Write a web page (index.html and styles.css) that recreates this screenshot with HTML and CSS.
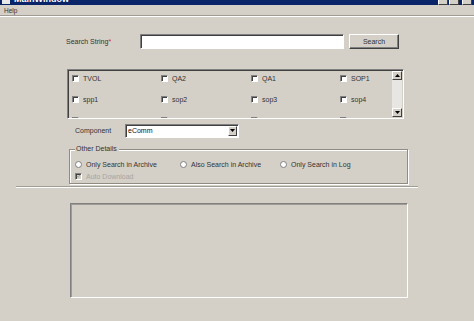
FILE: index.html
```html
<!DOCTYPE html>
<html>
<head>
<meta charset="utf-8">
<link rel="stylesheet" href="styles.css">
</head>
<body>
<div class="window">
  <div class="titlebar">
    <div class="title"><span class="appicon"></span>MainWindow</div>
    <div class="tbtns"><span class="tbtn"></span><span class="tbtn"></span><span class="tbtn"></span></div>
  </div>
  <div class="menubar"><span class="menu">Help</span></div>
  <div class="content">
    <div class="search-row">
      <label class="lbl">Search String<span class="req">*</span></label>
      <div class="input"></div>
      <div class="button">Search</div>
    </div>
    <div class="list">
      <div class="grid">
        <div class="cb"><span class="box"></span>TVOL</div>
        <div class="cb"><span class="box"></span>QA2</div>
        <div class="cb"><span class="box"></span>QA1</div>
        <div class="cb"><span class="box"></span>SOP1</div>
        <div class="cb"><span class="box"></span>spp1</div>
        <div class="cb"><span class="box"></span>sop2</div>
        <div class="cb"><span class="box"></span>sop3</div>
        <div class="cb"><span class="box"></span>sop4</div>
        <div class="cb"><span class="box"></span>sop5</div>
        <div class="cb"><span class="box"></span>sop6</div>
        <div class="cb"><span class="box"></span>EAP1</div>
        <div class="cb"><span class="box"></span>EAP2</div>
      </div>
      <div class="scrollbar">
        <div class="sbtn"><svg width="5" height="3" viewBox="0 0 5 3"><path d="M2.5 0 L5 3 L0 3 Z" fill="#000"/></svg></div>
        <div class="track"></div>
        <div class="sbtn"><svg width="5" height="3" viewBox="0 0 5 3"><path d="M0 0 L5 0 L2.5 3 Z" fill="#000"/></svg></div>
      </div>
    </div>
    <div class="comp-row">
      <label class="lbl2">Component</label>
      <div class="combo"><span class="ctext">eComm</span><span class="cbtn"><svg width="5" height="3" viewBox="0 0 5 3"><path d="M0 0 L5 0 L2.5 3 Z" fill="#000"/></svg></span></div>
    </div>
    <div class="group">
      <div class="gtitle">Other Details</div>
      <div class="radios">
        <div class="radio r1"><span class="dot"></span>Only Search in Archive</div>
        <div class="radio r2"><span class="dot"></span>Also Search in Archive</div>
        <div class="radio r3"><span class="dot"></span>Only Search in Log</div>
      </div>
      <div class="auto"><span class="box dis"><svg width="6" height="6" viewBox="0 0 6 6"><path d="M1 3 L2.5 4.5 L5 1.5" stroke="#a0a0a0" stroke-width="1.2" fill="none"/></svg></span>Auto Download</div>
    </div>
    <div class="sep"></div>
    <div class="output"></div>
  </div>
</div>
</body>
</html>
```
FILE: styles.css
```css
* { box-sizing: border-box; }
html, body { margin: 0; padding: 0; }
body {
  width: 474px;
  height: 321px;
  overflow: hidden;
  background: #d4d0c8;
  font-family: "Liberation Sans", Arial, sans-serif;
  font-size: 7px;
  color: #333;
}
.window { width: 474px; height: 321px; display: flex; flex-direction: column; }
.titlebar {
  height: 5px;
  background: #0a246a;
  display: flex;
  justify-content: space-between;
  overflow: hidden;
}
.title {
  color: #fff;
  font-weight: bold;
  font-size: 9px;
  line-height: 9px;
  margin-top: -5px;
  padding-left: 2px;
  display: flex;
  align-items: flex-start;
}
.appicon {
  width: 8px; height: 9px;
  background: #e8e8e8;
  margin-right: 4px;
}
.tbtns { display: flex; gap: 1px; padding-right: 2px; margin-top: -4px; }
.tbtn {
  width: 10px; height: 9px;
  background: #d4d0c8;
  border: 1px solid;
  border-color: #fff #404040 #404040 #fff;
}
.tbtn:last-child { margin-left: 2px; }
.menubar {
  height: 11px;
  border-bottom: 1px solid #a09c94;
  box-shadow: 0 1px 0 #fff;
  padding-left: 4px;
  display: flex;
  align-items: center;
}
.menu { font-size: 6.5px; color: #333; }
.content { display: flex; flex-direction: column; flex: 1; }
.search-row {
  display: flex;
  align-items: center;
  margin-top: 18px;
  padding-left: 66px;
  height: 15px;
}
.lbl { width: 74px; }
.req { color: #e02020; }
.input {
  width: 204px; height: 15px;
  background: #fff;
  border: 1px solid;
  border-color: #808080 #fff #fff #808080;
  box-shadow: inset 1px 1px 0 #404040;
}
.button {
  margin-left: 5px;
  width: 50px; height: 15px;
  border: 1px solid;
  border-color: #fff #404040 #404040 #fff;
  box-shadow: inset -1px -1px 0 #808080;
  display: flex; align-items: center; justify-content: center;
}
.list {
  margin-top: 20px;
  margin-left: 67px;
  width: 337px;
  height: 50px;
  border: 1px solid;
  border-color: #808080 #fff #fff #808080;
  box-shadow: inset 1px 1px 0 #404040;
  display: flex;
  overflow: hidden;
}
.grid {
  flex: 1;
  display: grid;
  grid-template-columns: 89px 90px 89px 1fr;
  grid-auto-rows: 21px;
  padding-left: 4px;
  margin-top: -2px;
  overflow: hidden;
}
.cb { display: flex; align-items: center; }
.box {
  width: 7px; height: 7px;
  background: #fff;
  border: 1px solid;
  border-color: #808080 #fff #fff #808080;
  box-shadow: inset 1px 1px 0 #404040;
  margin-right: 4px;
  flex: none;
}
.box.dis { background: #d4d0c8; display: flex; align-items: center; justify-content: center; }
.scrollbar {
  width: 10px;
  display: flex;
  flex-direction: column;
  background: #e8e6e2;
  margin: 1px 1px 1px 0;
}
.sbtn {
  height: 9px;
  background: #d4d0c8;
  border: 1px solid;
  border-color: #fff #404040 #404040 #fff;
  display: flex; align-items: center; justify-content: center;
}
.track { flex: 1; }
.comp-row {
  display: flex;
  align-items: center;
  margin-top: 4px;
  padding-left: 75px;
  height: 15px;
}
.lbl2 { width: 50px; }
.combo {
  width: 114px; height: 14px;
  background: #fff;
  border: 1px solid;
  border-color: #808080 #fff #fff #808080;
  box-shadow: inset 1px 1px 0 #404040;
  display: flex; align-items: center; justify-content: space-between;
  padding: 1px 1px 1px 2px;
}
.ctext { color: #111; }
.cbtn {
  width: 9px; height: 10px;
  background: #d4d0c8;
  border: 1px solid;
  border-color: #fff #404040 #404040 #fff;
  display: flex; align-items: center; justify-content: center;
}
.group {
  position: relative;
  margin-top: 11px;
  margin-left: 69px;
  width: 339px;
  height: 35px;
  border: 1px solid #908c84;
  box-shadow: 1px 1px 0 #fff, inset 1px 1px 0 #fff;
}
.gtitle {
  position: absolute;
  left: 5px;
  top: -5px;
  background: #d4d0c8;
  padding: 0 2px 0 1px;
  line-height: 8px;
}
.radios { display: flex; margin-top: 9px; padding-left: 5px; height: 10px; align-items: center; }
.radio { display: flex; align-items: center; }
.r1 { width: 105px; }
.r2 { width: 100px; }
.dot {
  width: 7px; height: 7px;
  border-radius: 50%;
  background: #fff;
  border: 1px solid #808080;
  margin-right: 4px;
}
.auto { display: flex; align-items: center; margin-top: 2px; padding-left: 5px; color: #a8a4a0; height: 10px; }
.sep {
  margin-top: 2px;
  margin-left: 16px;
  width: 402px;
  height: 2px;
  border-top: 1px solid #a09c94;
  border-bottom: 1px solid #fff;
}
.output {
  margin-top: 15px;
  margin-left: 70px;
  width: 338px;
  height: 95px;
  border: 1px solid;
  border-color: #808080 #fff #fff #808080;
  box-shadow: inset 1px 1px 0 #a09c94;
}
```
